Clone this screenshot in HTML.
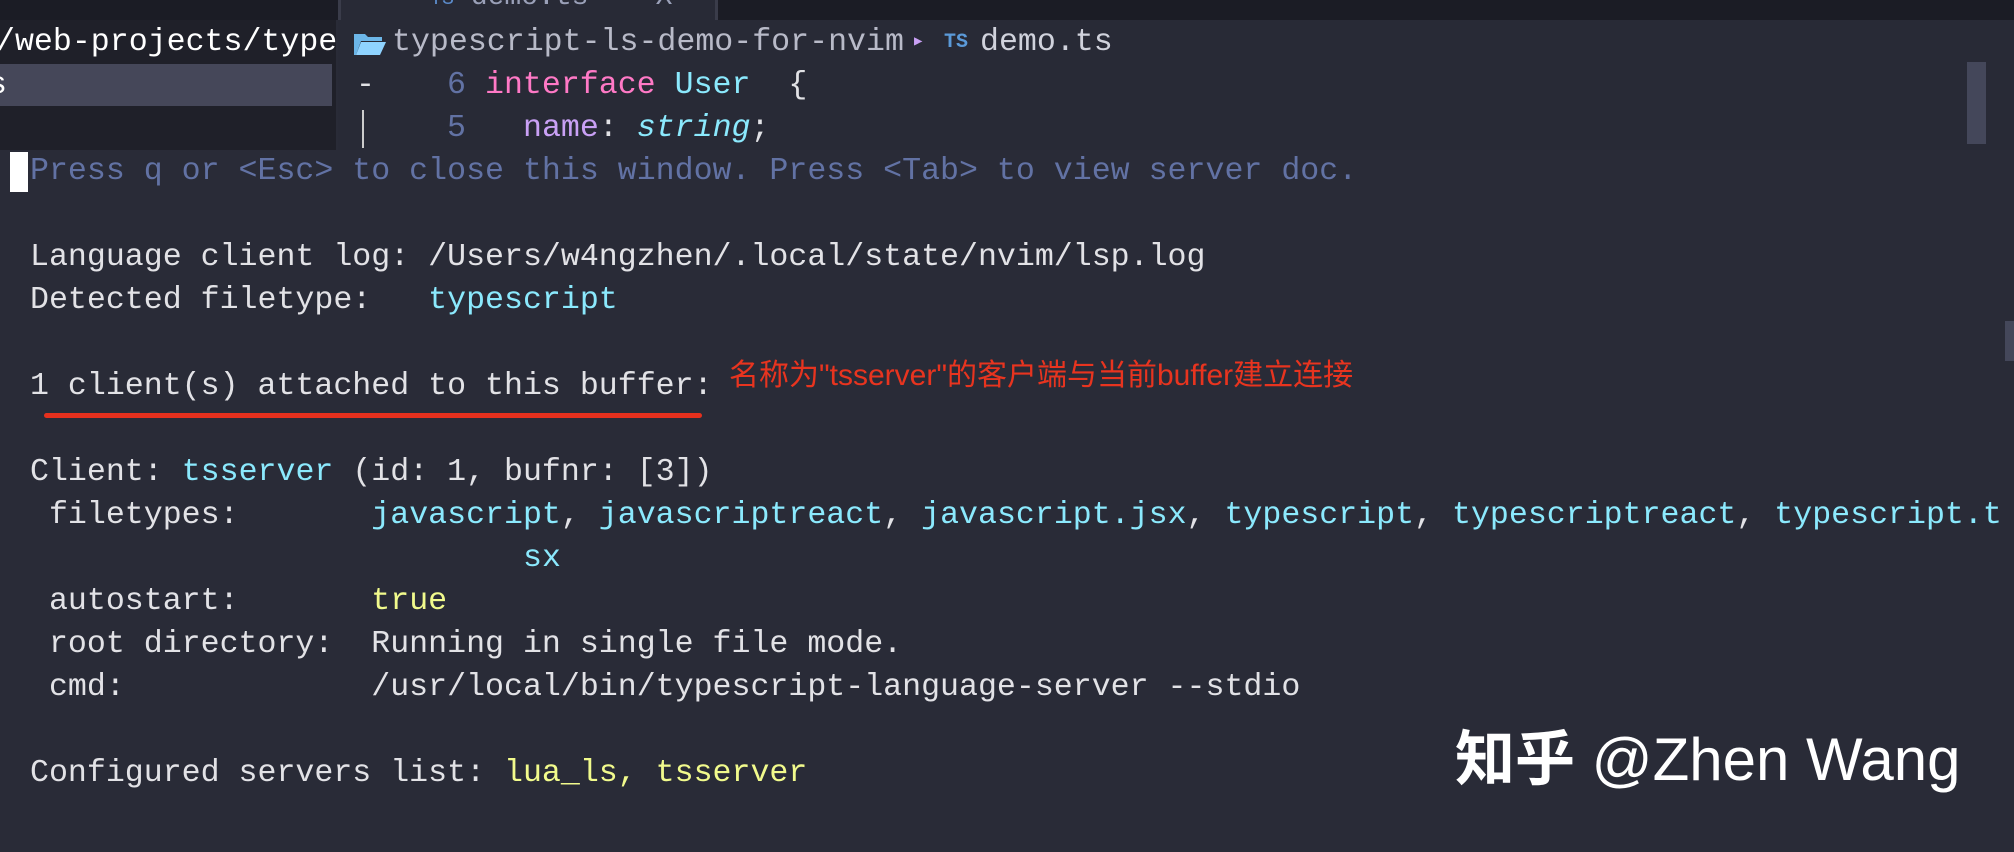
<!DOCTYPE html>
<html><head><meta charset="utf-8"><style>
body{margin:0;width:2014px;height:852px;overflow:hidden;background:#292b37;position:relative;font-family:"Liberation Mono",monospace;font-size:31.6px;color:#e2e2e6}
.r{position:absolute;height:43px;line-height:43px;white-space:pre}
.c{color:#8be9fd}.y{color:#f1fa8c}.g{color:#6272a4}.p{color:#ff79c6}.v{color:#c9a0f5}
</style></head><body>
<div style="position:absolute;left:0;top:0;width:2014px;height:20px;background:#1b1c25"></div>
<div style="position:absolute;left:338px;top:0;width:374px;height:20px;background:#282a36;border-left:3px solid #3a3c4a;border-right:3px solid #3a3c4a"></div>
<div class="r" style="left:430px;top:-24px;color:#9aa0b8;font-size:28px"><span style="color:#5b8ac9;font-size:20px">TS</span> demo.ts    X</div>
<div style="position:absolute;left:0;top:20px;width:336px;height:130px;background:#1f2029"></div>
<div style="position:absolute;left:0;top:64px;width:332px;height:42px;background:#454759"></div>
<div class="r" style="left:-4px;top:21px;color:#fff">/web-projects/type</div>
<div class="r" style="left:-12px;top:64px;color:#fff">s</div>
<div style="position:absolute;left:338px;top:20px;width:1676px;height:130px;background:#282a36"></div>
<div style="position:absolute;left:362px;top:110px;width:2px;height:38px;background:#ccc"></div>
<svg style="position:absolute;left:353px;top:31px" width="34" height="26" viewBox="0 0 34 26"><path d="M1 3h11l3 3h14v4H8L3 24H1z" fill="#6cb6e8"/><path d="M8 11h25l-6 13H3z" fill="#8fd3ff"/></svg>
<div class="r" style="left:392px;top:21px;color:#b8bac8">typescript-ls-demo-for-nvim</div>
<div class="r" style="left:914px;top:21px;color:#c9a0f5;font-size:14px">▶</div>
<div class="r" style="left:944px;top:21px;color:#5b9ad9;font-size:20px;font-weight:bold">TS</div>
<div class="r" style="left:980px;top:21px;color:#d0d2dc">demo.ts</div>
<div class="r" style="left:356px;top:64px">-</div>
<div class="r g" style="left:447px;top:64px">6</div>
<div class="r" style="left:485px;top:64px"><span class="p">interface</span> <span class="c">User</span>  {</div>
<div class="r g" style="left:447px;top:107px">5</div>
<div class="r" style="left:523px;top:107px"><span class="v">name</span>: <i class="c">string</i>;</div>
<div style="position:absolute;left:1967px;top:62px;width:19px;height:82px;background:#44475a"></div>
<div style="position:absolute;left:2005px;top:321px;width:9px;height:40px;background:#44475a"></div>
<div style="position:absolute;left:10px;top:152px;width:18px;height:40px;background:#fff"></div>
<div class="r g" style="left:30px;top:150px">Press q or &lt;Esc&gt; to close this window. Press &lt;Tab&gt; to view server doc.</div>
<div class="r" style="left:30px;top:236px">Language client log: /Users/w4ngzhen/.local/state/nvim/lsp.log</div>
<div class="r" style="left:30px;top:279px">Detected filetype:   <span class="c">typescript</span></div>
<div class="r" style="left:30px;top:365px">1 client(s) attached to this buffer:</div>
<div style="position:absolute;left:44px;top:413px;width:658px;height:5px;background:#e5301d;border-radius:3px"></div>
<div class="r" style="left:729px;top:354px;color:#e8341f;font-family:'Liberation Sans','Noto Sans CJK SC',sans-serif;font-size:30px">名称为"tsserver"的客户端与当前buffer建立连接</div>
<div class="r" style="left:30px;top:451px">Client: <span class="c">tsserver</span> (id: 1, bufnr: [3])</div>
<div class="r" style="left:30px;top:494px"> filetypes:       <span class="c">javascript</span>, <span class="c">javascriptreact</span>, <span class="c">javascript.jsx</span>, <span class="c">typescript</span>, <span class="c">typescriptreact</span>, <span class="c">typescript.t</span></div>
<div class="r c" style="left:523px;top:537px">sx</div>
<div class="r" style="left:30px;top:580px"> autostart:       <span class="y">true</span></div>
<div class="r" style="left:30px;top:623px"> root directory:  Running in single file mode.</div>
<div class="r" style="left:30px;top:666px"> cmd:             /usr/local/bin/typescript-language-server --stdio</div>
<div class="r" style="left:30px;top:752px">Configured servers list: <span class="y">lua_ls, tsserver</span></div>
<div class="r" style="left:1455px;top:730px;height:60px;line-height:60px;color:#fff;font-family:'Liberation Sans','Noto Sans CJK SC',sans-serif;font-size:60px;font-weight:bold">知乎 <span style="font-weight:normal">@Zhen Wang</span></div>
</body></html>
